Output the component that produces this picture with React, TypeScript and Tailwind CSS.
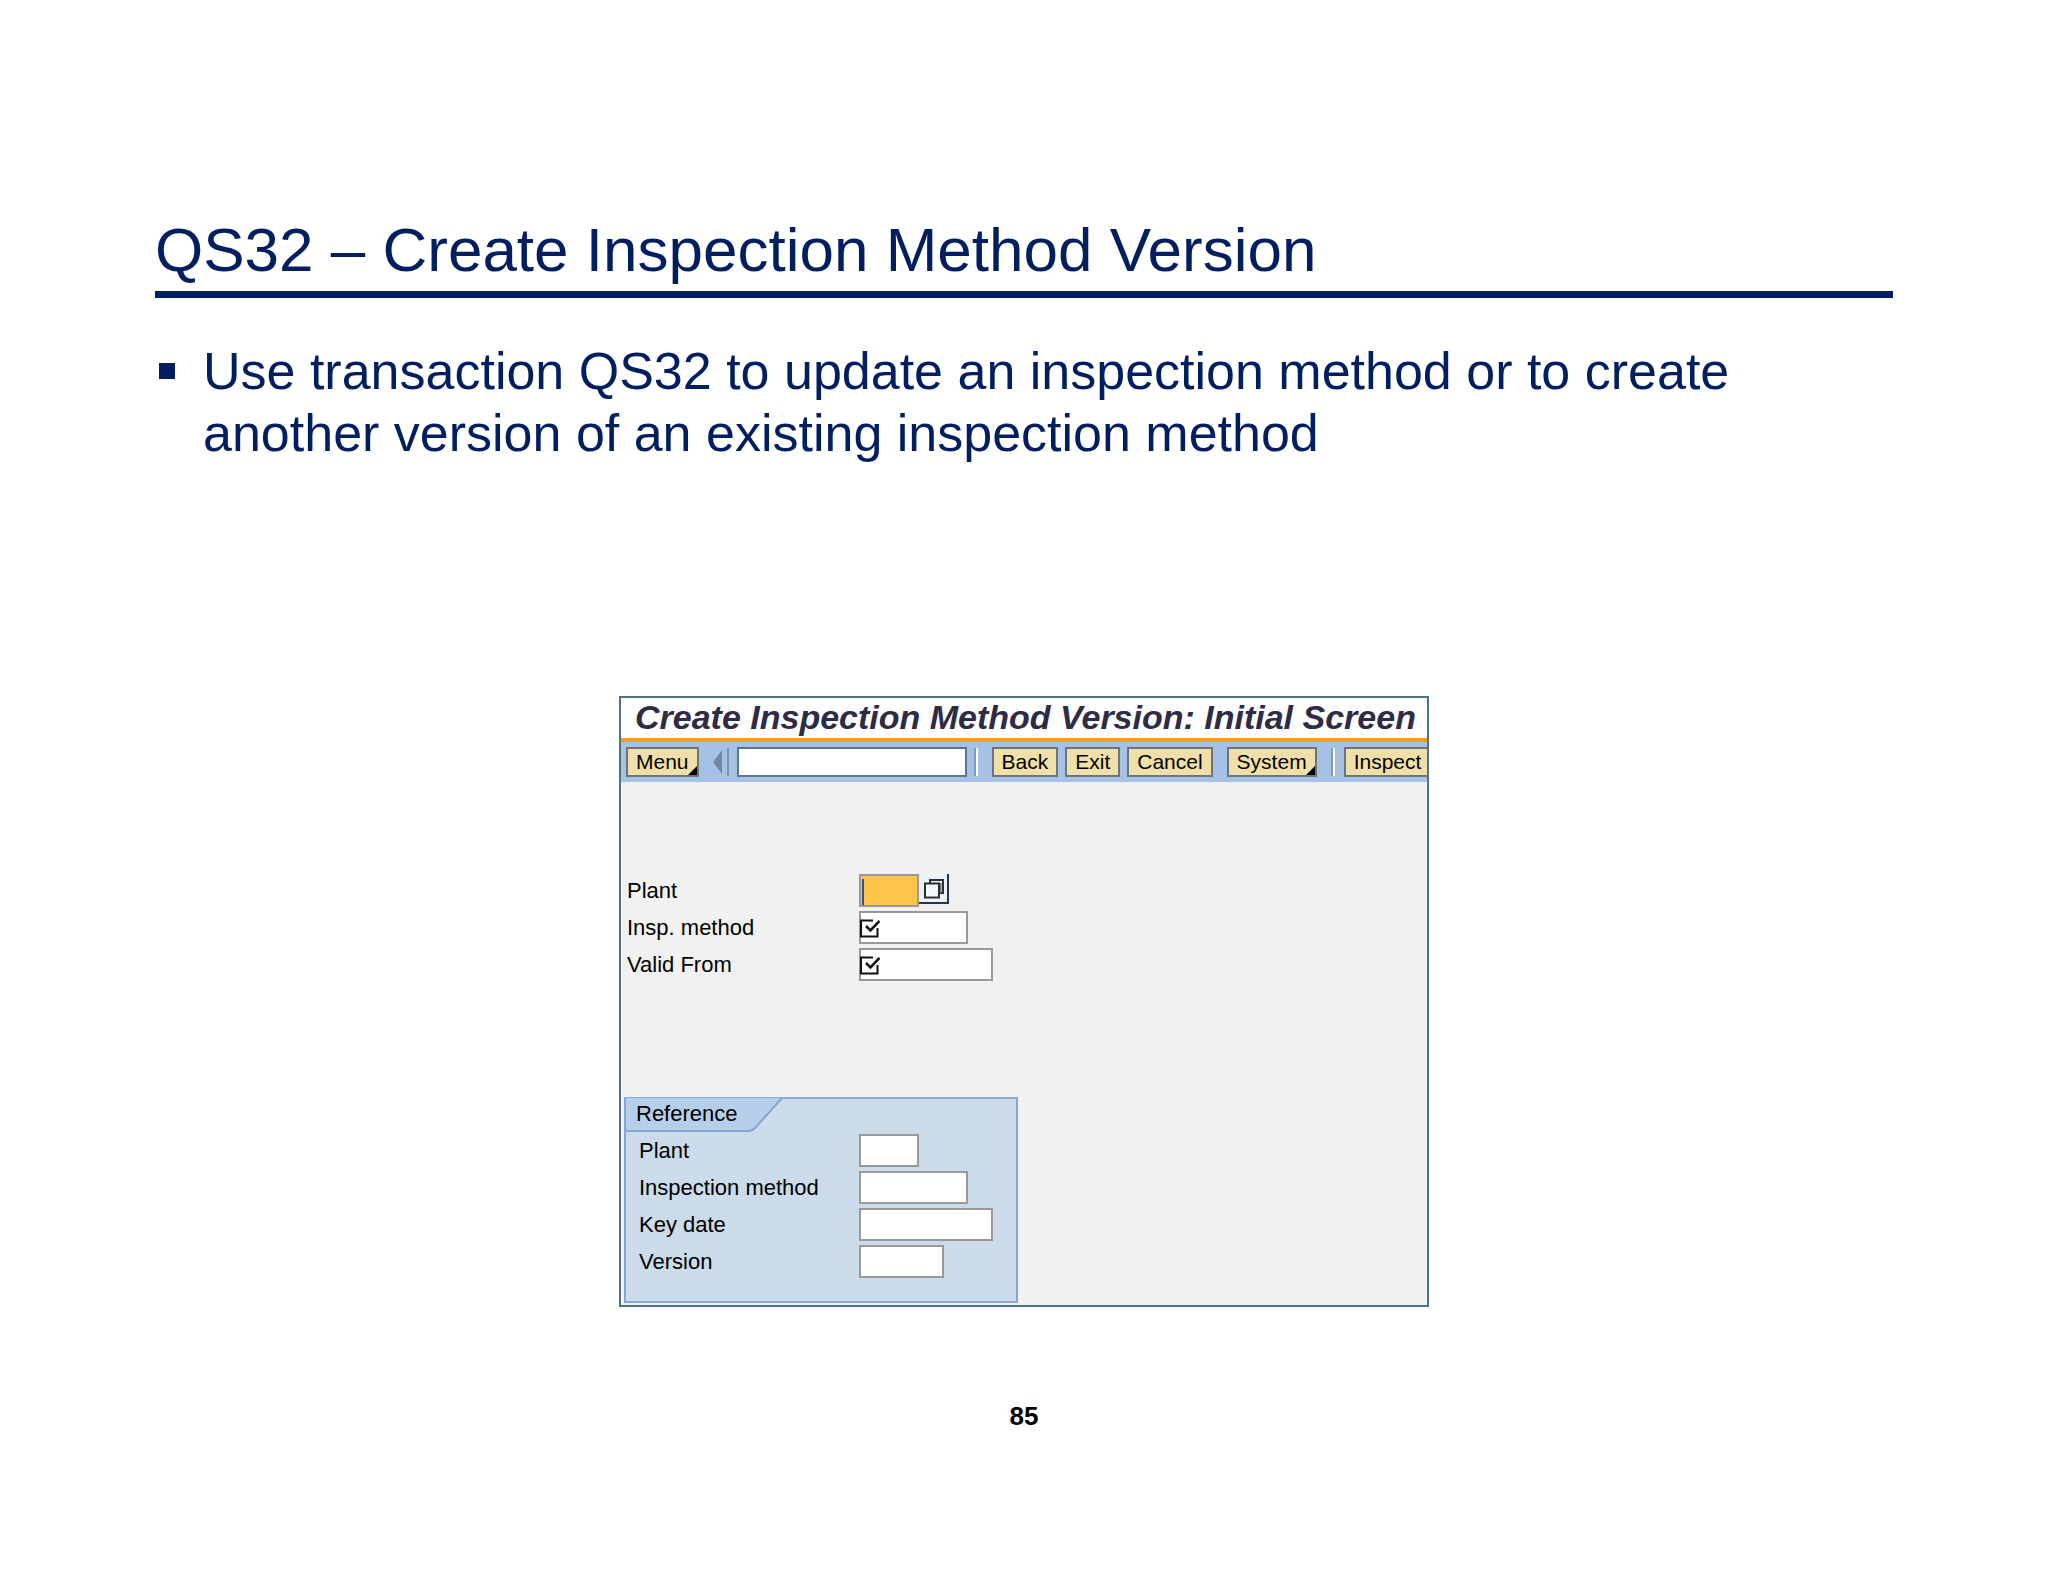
import type { ReactNode } from 'react';
import clsx from 'clsx';

interface Field {
  id: string;
  label: string;
  width: string;
  required?: boolean;
  active?: boolean;
}

const methodFields: Field[] = [
  { id: 'plant', label: 'Plant', width: 'w-[60px]', active: true },
  { id: 'insp-method', label: 'Insp. method', width: 'w-[109px]', required: true },
  { id: 'valid-from', label: 'Valid From', width: 'w-[134px]', required: true },
];

const referenceFields: Field[] = [
  { id: 'ref-plant', label: 'Plant', width: 'w-[60px]' },
  { id: 'ref-method', label: 'Inspection method', width: 'w-[109px]' },
  { id: 'ref-key-date', label: 'Key date', width: 'w-[134px]' },
  { id: 'ref-version', label: 'Version', width: 'w-[85px]' },
];

function ToolbarButton({ children, menu }: { children: ReactNode; menu?: boolean }) {
  return (
    <button
      type="button"
      className="relative h-[30px] shrink-0 border-2 border-[#6e7377] bg-[#f1dfa9] px-2 text-[21px] leading-[26px] whitespace-nowrap text-black"
    >
      {children}
      {menu && (
        <svg className="absolute right-0 bottom-0 h-[9px] w-[9px]" viewBox="0 0 9 9" aria-hidden="true">
          <path d="M9 0V9H0Z" fill="#000" />
        </svg>
      )}
    </button>
  );
}

function Separator() {
  return <div className="h-7 w-1 shrink-0 border-l-2 border-[#7f9dc0] bg-white" />;
}

// Tick in an open box, shown inside mandatory fields
function RequiredMark() {
  return (
    <svg
      className="pointer-events-none absolute top-2 left-px h-[19px] w-5"
      viewBox="0 0 20 19"
      fill="none"
      stroke="#111"
      strokeWidth="2"
      aria-hidden="true"
    >
      <path d="M13 1.5H1V17.5H17.5V9" />
      <path d="M6 7L10.5 11.5L19.5 2" strokeWidth="2.6" />
    </svg>
  );
}

function FieldRow({ field, labelWidth }: { field: Field; labelWidth: string }) {
  return (
    <div className="flex h-[33px] items-start">
      <label htmlFor={field.id} className={clsx('shrink-0 text-[22px] leading-[34px] text-black', labelWidth)}>
        {field.label}
      </label>
      <div className="relative">
        <input
          id={field.id}
          type="text"
          className={clsx(
            'block h-[33px] border-2 border-[#999] px-1 text-[22px] outline-none',
            field.active ? 'bg-[#fdc44c]' : 'bg-white',
            field.required && 'pl-6',
            field.width,
          )}
        />
        {field.required && <RequiredMark />}
        {field.active && <span className="absolute bottom-0.5 left-[3px] h-[26px] w-0.5 bg-[#44507a]" />}
      </div>
      {field.active && (
        <button
          type="button"
          aria-label="Search help"
          className="h-[30px] w-[30px] border-r-2 border-b-2 border-[#25344f] bg-[#eaf1f8]"
        >
          <svg className="h-7 w-7" viewBox="0 0 28 28" fill="none" stroke="#2b3034" aria-hidden="true">
            <path d="M11 9V6H24V19H21" strokeWidth="2" />
            <path d="M21 9V19" strokeWidth="3" stroke="#6d7377" />
            <rect x="6" y="9.5" width="14" height="14" strokeWidth="2" fill="#f6f9fb" />
          </svg>
        </button>
      )}
    </div>
  );
}

function SapWindow() {
  return (
    <section className="mx-auto w-[810px] max-w-full overflow-hidden border-2 border-[#4f7385] bg-[#f1f1f1]">
      <h2 className="h-10 bg-[#fdfdfe] pl-[14px] text-[34px] leading-[38px] font-bold whitespace-nowrap text-[#2e2b45] italic">
        Create Inspection Method Version: Initial Screen
      </h2>

      <div className="flex h-11 items-center border-t-4 border-[#f0a01e] bg-[#a5c1e5] pl-[5px]">
        <ToolbarButton menu>Menu</ToolbarButton>
        <button type="button" aria-label="Previous" className="ml-[14px] shrink-0">
          <svg className="h-6 w-[9px]" viewBox="0 0 9 24" aria-hidden="true">
            <path d="M9 0V24L0 12Z" fill="#71869f" />
          </svg>
        </button>
        <div className="ml-[5px] h-7 w-0.5 shrink-0 bg-[#7b91ad]" />
        <input
          type="text"
          aria-label="Command"
          className="ml-2 h-[30px] w-[230px] shrink-0 border-2 border-[#5f7487] bg-white px-1 text-[21px] outline-none"
        />
        <div className="mr-[14px] ml-[7px] flex">
          <Separator />
        </div>
        <div className="flex gap-[7px]">
          <ToolbarButton>Back</ToolbarButton>
          <ToolbarButton>Exit</ToolbarButton>
          <ToolbarButton>Cancel</ToolbarButton>
        </div>
        <div className="ml-[14px] flex">
          <ToolbarButton menu>System</ToolbarButton>
        </div>
        <div className="mr-[9px] ml-[14px] flex">
          <Separator />
        </div>
        <ToolbarButton>Inspect</ToolbarButton>
      </div>

      <form className="pt-[92px] pb-0.5">
        <div className="flex flex-col gap-1 pl-1.5">
          {methodFields.map((field) => (
            <FieldRow key={field.id} field={field} labelWidth="w-[232px]" />
          ))}
        </div>

        <fieldset className="mt-[116px] ml-[3px] w-[394px] border-2 border-[#86a6d3] bg-[#ccdbe9] pb-[23px]">
          <div className="relative h-[35px]">
            <svg className="absolute -top-0.5 left-0 h-9 w-[160px]" viewBox="0 0 160 36" aria-hidden="true">
              <path d="M0 1H156L129 31Q126 34 122 34H0Z" fill="#b5cfea" />
              <path d="M156 1L129 31Q126 34 122 34H0" fill="none" stroke="#86a6d3" strokeWidth="2" />
            </svg>
            <h3 className="relative pl-2.5 text-[22px] leading-[30px] text-black">Reference</h3>
          </div>
          <div className="flex flex-col gap-1 pl-[13px]">
            {referenceFields.map((field) => (
              <FieldRow key={field.id} field={field} labelWidth="w-[220px]" />
            ))}
          </div>
        </fieldset>
      </form>
    </section>
  );
}

export default function App() {
  return (
    <main className="min-h-screen bg-white px-[155px] pt-[214px] pb-[120px] font-['Liberation_Sans',Arial,sans-serif]">
      <h1 className="border-b-[7px] border-[#001e60] pb-[5px] text-[62px] leading-[72px] text-[#001e60]">
        QS32 – Create Inspection Method Version
      </h1>

      <ul className="mt-[42px] text-[52px] leading-[62px] text-[#001e60]">
        <li className="flex">
          <span className="mt-[23px] mr-7 ml-1 h-4 w-4 shrink-0 bg-[#001e60]" />
          <p className="max-w-[1560px]">
            Use transaction QS32 to update an inspection method or to create another version of an existing
            inspection method
          </p>
        </li>
      </ul>

      <div className="mt-[232px]">
        <SapWindow />
      </div>

      <footer className="mt-[93px] text-center text-[26px] leading-8 font-bold text-black">85</footer>
    </main>
  );
}
